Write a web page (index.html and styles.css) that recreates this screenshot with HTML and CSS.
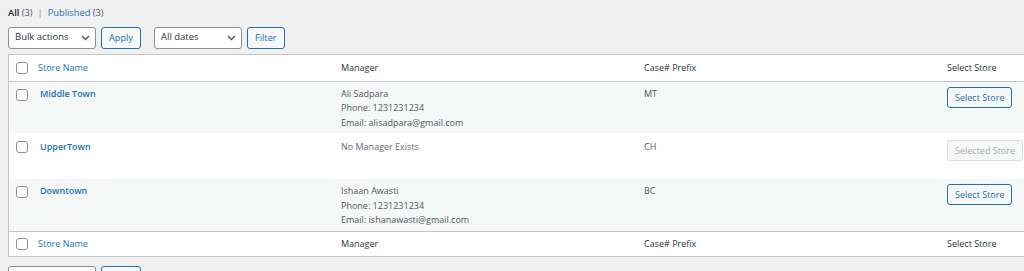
FILE: index.html
```html
<!DOCTYPE html>
<html lang="en">
<head>
<meta charset="utf-8">
<title>Stores</title>
<link rel="stylesheet" href="styles.css">
</head>
<body>
<div class="wrap">
  <ul class="subsubsub">
    <li class="current">All <span class="count">(3)</span></li>
    <li class="sep">|</li>
    <li><a href="#">Published</a> <span class="count">(3)</span></li>
  </ul>

  <div class="tablenav">
    <div class="select w88"><span>Bulk actions</span><svg width="9" height="6" viewBox="0 0 9 6"><path d="M1 1l3.5 3.5L8 1" fill="none" stroke="#50575e" stroke-width="1.4"/></svg></div>
    <button class="button">Apply</button>
    <div class="select w88 gap-l"><span>All dates</span><svg width="9" height="6" viewBox="0 0 9 6"><path d="M1 1l3.5 3.5L8 1" fill="none" stroke="#50575e" stroke-width="1.4"/></svg></div>
    <button class="button">Filter</button>
  </div>

  <div class="table-clip">
    <table class="list">
      <colgroup>
        <col class="c-cb"><col class="c-col"><col class="c-col"><col class="c-col"><col class="c-col">
      </colgroup>
      <thead>
        <tr>
          <th class="cb"><span class="checkbox"></span></th>
          <th><a href="#">Store Name</a></th>
          <th>Manager</th>
          <th>Case# Prefix</th>
          <th>Select Store</th>
        </tr>
      </thead>
      <tbody>
        <tr class="alt">
          <td class="cb"><span class="checkbox"></span></td>
          <td><a class="title" href="#">Middle Town</a></td>
          <td>Ali Sadpara<br>Phone: 1231231234<br>Email: alisadpara@gmail.com</td>
          <td>MT</td>
          <td><button class="button small">Select Store</button></td>
        </tr>
        <tr class="short">
          <td class="cb"><span class="checkbox"></span></td>
          <td><a class="title" href="#">UpperTown</a></td>
          <td class="muted">No Manager Exists</td>
          <td>CH</td>
          <td><button class="button small disabled">Selected Store</button></td>
        </tr>
        <tr class="alt">
          <td class="cb"><span class="checkbox"></span></td>
          <td><a class="title" href="#">Downtown</a></td>
          <td>Ishaan Awasti<br>Phone: 1231231234<br>Email: ishanawasti@gmail.com</td>
          <td>BC</td>
          <td><button class="button small">Select Store</button></td>
        </tr>
      </tbody>
      <tfoot>
        <tr>
          <th class="cb"><span class="checkbox"></span></th>
          <th><a href="#">Store Name</a></th>
          <th>Manager</th>
          <th>Case# Prefix</th>
          <th>Select Store</th>
        </tr>
      </tfoot>
    </table>
  </div>

  <div class="tablenav bottom">
    <div class="select w88"><span>Bulk actions</span><svg width="9" height="6" viewBox="0 0 9 6"><path d="M1 1l3.5 3.5L8 1" fill="none" stroke="#50575e" stroke-width="1.4"/></svg></div>
    <button class="button">Apply</button>
  </div>
</div>
</body>
</html>
```

FILE: styles.css
```css
html, body {
  margin: 0;
  padding: 0;
  overflow: hidden;
  background: #f0f0f1;
}
body {
  font-family: "Open Sans", "Noto Sans", sans-serif;
  font-size: 9px;
  line-height: 14.5px;
  color: #50575e;
}
a {
  color: #2271b1;
  text-decoration: none;
}
.wrap {
  padding: 0 0 0 8px;
}
.subsubsub {
  list-style: none;
  margin: 0;
  padding: 6px 0 0 0;
  display: flex;
  gap: 5px;
  color: #646970;
  font-size: 9.3px;
}
.subsubsub li { margin: 0; }
.subsubsub .current { color: #1d2327; font-weight: 600; }
.subsubsub .current .count { font-weight: 400; color: #50575e; }
.subsubsub .sep { color: #8c8f94; }
.subsubsub .count { color: #50575e; }

.tablenav {
  display: flex;
  align-items: center;
  margin-top: 6px;
  height: 22px;
}
.tablenav.bottom { margin-top: 9px; }

.select {
  box-sizing: border-box;
  height: 22px;
  border: 1px solid #8c8f94;
  border-radius: 3px;
  background: #fff;
  color: #2c3338;
  font-size: 9.5px;
  display: flex;
  align-items: center;
  justify-content: space-between;
  padding: 0 5px 0 6px;
}
.select svg { display: block; }
.w88 { width: 88px; }
.gap-l { margin-left: 13px; }

.button {
  box-sizing: border-box;
  height: 22px;
  margin: 0 0 0 5px;
  padding: 0 7px;
  border: 1px solid #2271b1;
  border-radius: 3px;
  background: #f6f7f7;
  color: #2271b1;
  font-family: inherit;
  font-size: 9.2px;
  line-height: 20px;
  cursor: pointer;
}
.button.small {
  margin: 0;
  height: 21px;
  line-height: 19px;
  padding: 0 7px;
  font-size: 9px;
}
.button.disabled {
  color: #a7aaad;
  border-color: #dcdcde;
  background: #f6f7f7;
}

.table-clip {
  margin-top: 5px;
  width: 1016px;
  overflow: hidden;
}
.list {
  table-layout: fixed;
  width: 1234px;
  border-collapse: separate;
  border-spacing: 0;
  border: 1px solid #c3c4c7;
  background: #fff;
}
.c-cb { width: 21px; }
.c-col { width: 303px; }

.list th, .list td {
  text-align: left;
  vertical-align: top;
  padding: 5px 8px 3px;
  font-weight: 400;
}
.list thead th {
  color: #2c3338;
  padding: 6px 8px 5.5px;
  border-bottom: 1px solid #c3c4c7;
  vertical-align: middle;
}
.list tfoot th {
  color: #2c3338;
  padding: 5px 8px 5px;
  border-top: 1px solid #c3c4c7;
  vertical-align: middle;
}
.list .cb {
  padding-left: 7px;
  padding-right: 0;
}
.list thead .cb, .list tfoot .cb { padding-top: 5px; padding-bottom: 5px; }
.list td.cb .checkbox { margin-top: 2px; }

.checkbox {
  display: block;
  box-sizing: border-box;
  width: 12px;
  height: 12px;
  border: 1px solid #8c8f94;
  border-radius: 3px;
  background: #fff;
}

.list tr.alt td { background: #f6f7f7; }
.list tr.short { height: 46px; }
.list tr.short td { padding-top: 7px; }
.list tr.short td.cb .checkbox { margin-top: 1px; }

.title {
  font-weight: 600;
  padding-left: 2px;
}
.muted { color: #646970; }
```
